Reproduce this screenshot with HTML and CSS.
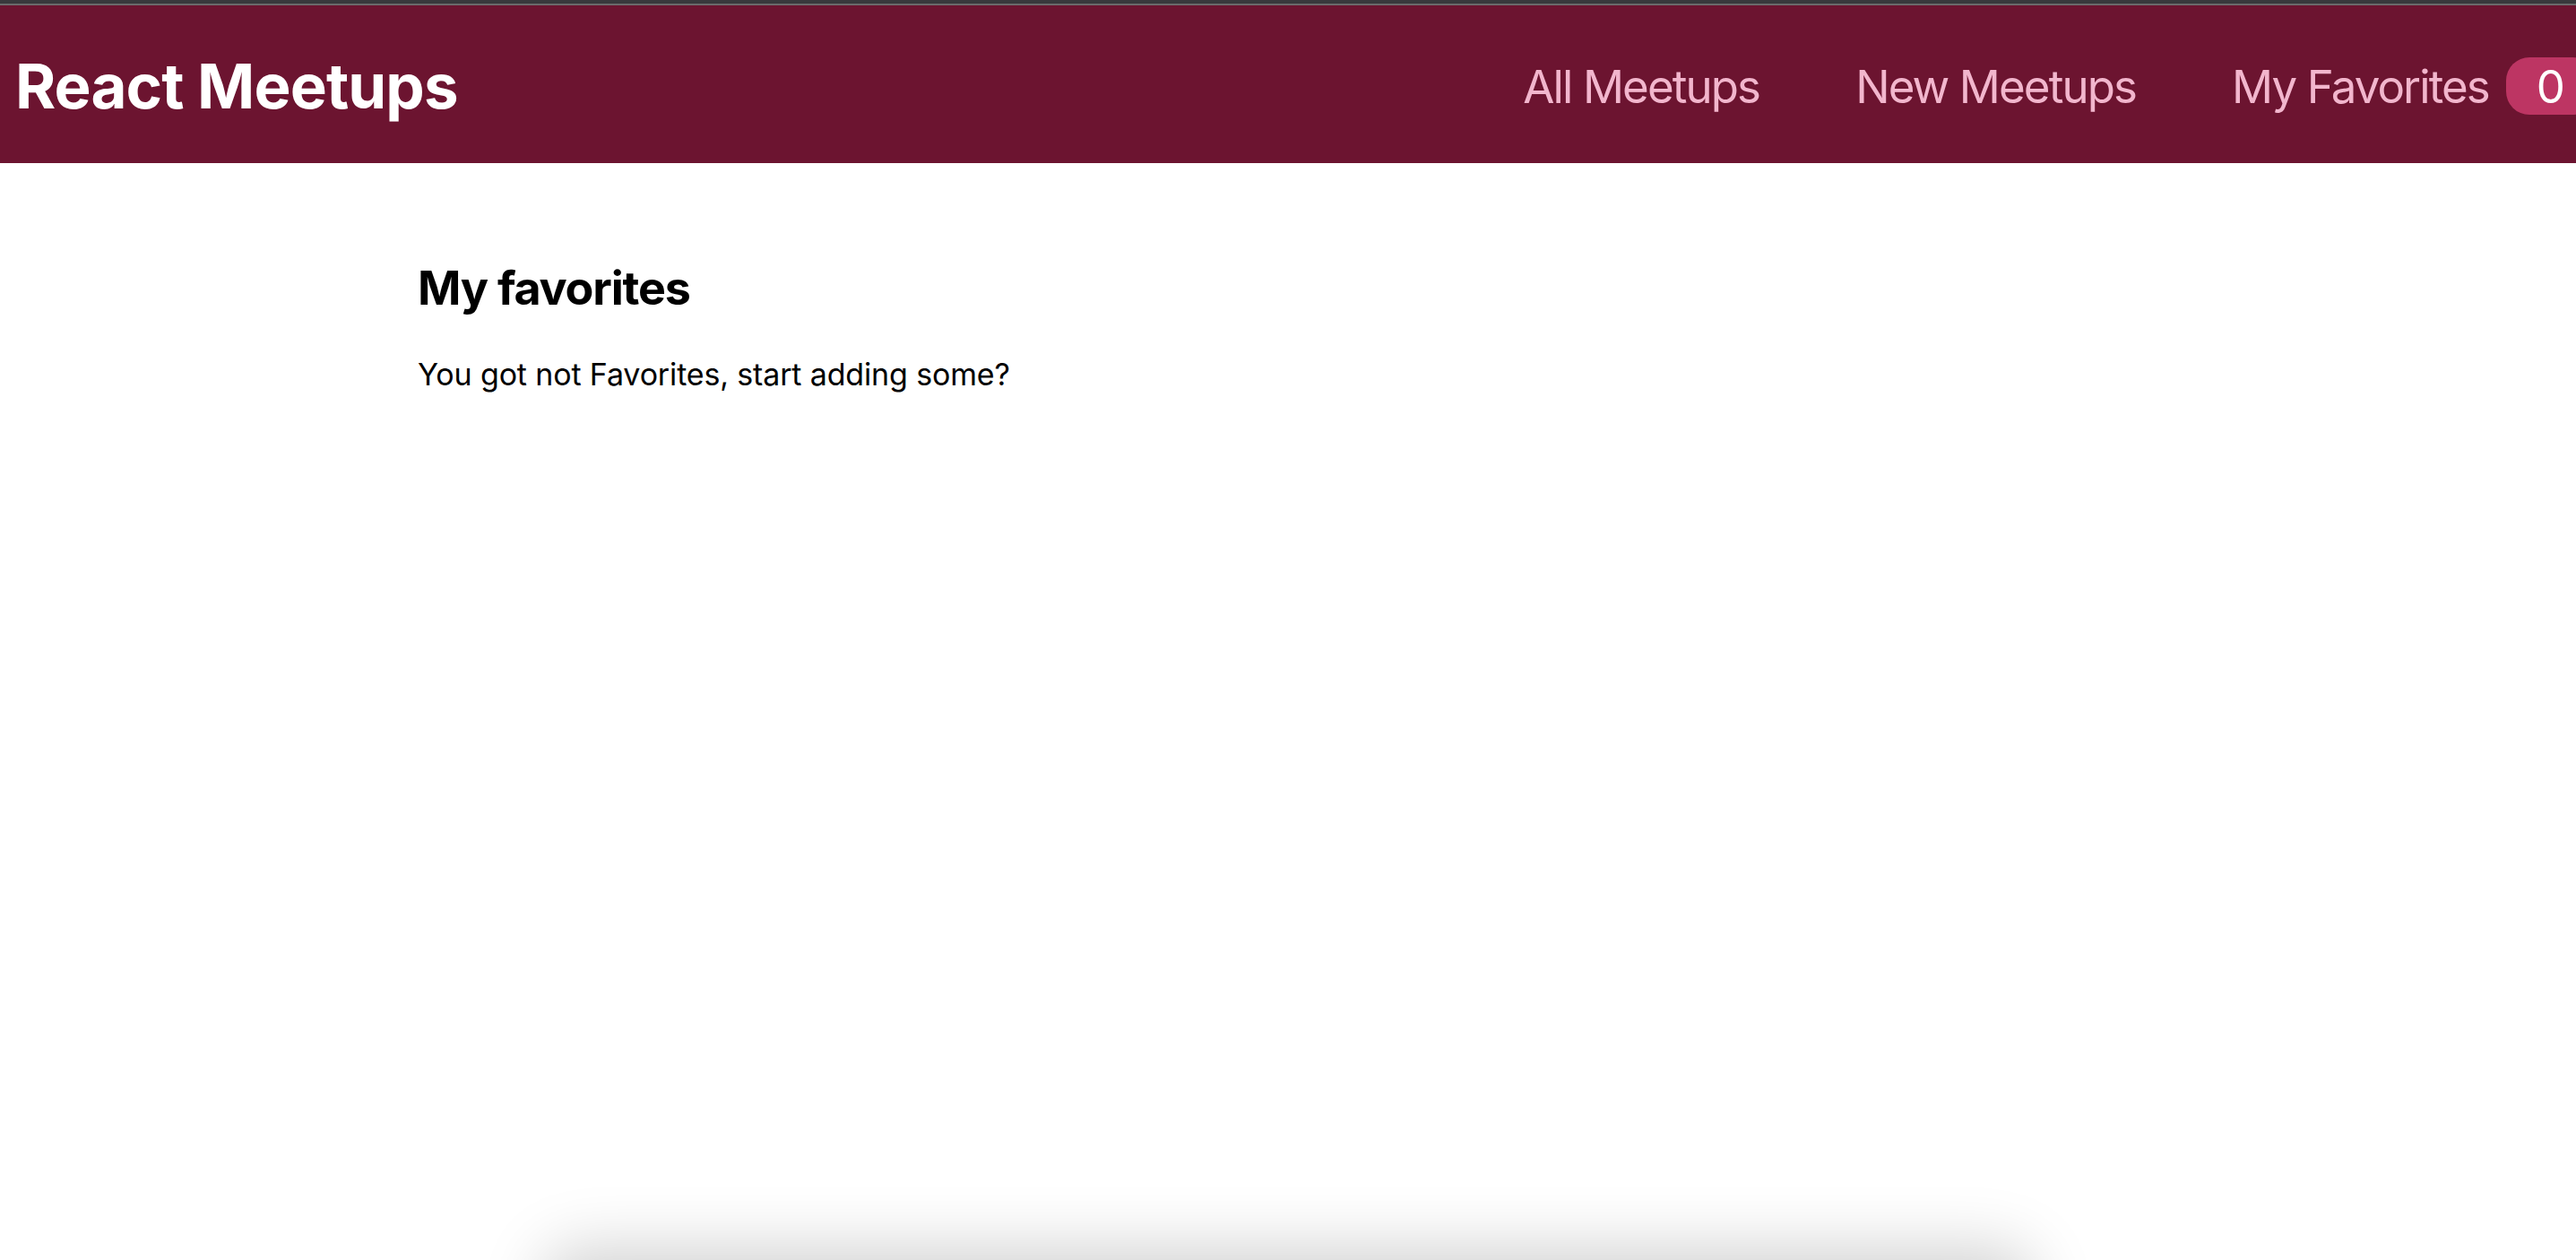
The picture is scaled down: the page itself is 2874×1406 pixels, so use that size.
FILE: index.html
```html
<!DOCTYPE html>
<html lang="en">
<head>
<meta charset="utf-8">
<title>React Meetups</title>
<link rel="stylesheet" href="styles.css">
</head>
<body>
<div class="chrome"></div>
<header class="header">
  <div class="logo">React Meetups</div>
  <nav class="nav">
    <a class="nav-link" href="#">All Meetups</a>
    <a class="nav-link" href="#">New Meetups</a>
    <a class="nav-link" href="#">My Favorites<span class="badge">0</span></a>
  </nav>
</header>
<main class="main">
  <h1 class="title">My favorites</h1>
  <p class="empty">You got not Favorites, start adding some?</p>
</main>
<div class="floating-card"></div>
</body>
</html>
```

FILE: styles.css
```css
html, body {
  margin: 0;
  padding: 0;
  height: 100%;
  overflow: hidden;
  background: #ffffff;
  font-family: Inter, "Noto Sans", "Liberation Sans", sans-serif;
}

.chrome {
  height: 4px;
  background: #38393c;
  border-bottom: 2px solid #6a6a6a;
}

.header {
  height: 176px;
  box-sizing: border-box;
  padding: 4px 0 0 17px;
  margin-right: -22px;
  display: flex;
  align-items: center;
  justify-content: space-between;
  background: #6c1430;
}

.logo {
  color: #ffffff;
  font-size: 69px;
  font-weight: 700;
  letter-spacing: -0.9px;
}

.nav {
  display: flex;
  align-items: center;
  gap: 107px;
}

.nav-link {
  display: flex;
  align-items: center;
  color: #f2b6cd;
  font-size: 51px;
  text-decoration: none;
  letter-spacing: -1.9px;
}

.badge {
  display: inline-flex;
  align-items: center;
  height: 64px;
  margin-left: 19px;
  padding: 0 34px;
  border-radius: 26px;
  background: #bd3563;
  color: #ffffff;
  font-size: 51px;
  letter-spacing: 0;
}

.main {
  padding: 108px 0 0 466px;
}

.title {
  margin: 0 0 44px;
  font-size: 52px;
  font-weight: 700;
  letter-spacing: -1.2px;
  color: #000000;
}

.empty {
  margin: 0;
  font-size: 34px;
  letter-spacing: -0.15px;
  color: #000000;
}

.floating-card {
  position: fixed;
  left: 620px;
  right: 620px;
  bottom: -100px;
  height: 100px;
  border-radius: 24px;
  background: #ffffff;
  box-shadow: 0 0 70px 14px rgba(0, 0, 0, 0.18);
}
```
